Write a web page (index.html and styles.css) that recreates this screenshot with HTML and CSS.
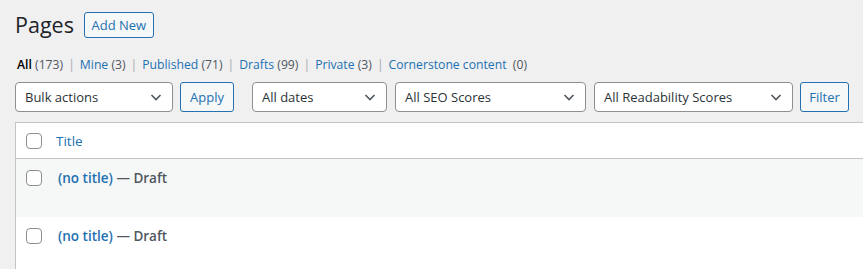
FILE: index.html
```html
<!DOCTYPE html>
<html>
<head>
<meta charset="utf-8">
<link rel="stylesheet" href="styles.css">
</head>
<body>
<div class="wrap">
  <div class="head">
    <h1 class="title">Pages</h1>
    <a class="add-new">Add New</a>
  </div>
  <ul class="subsubsub">
    <li><a class="current">All <span class="count">(173)</span></a><span class="sep">|</span></li>
    <li><a>Mine <span class="count">(3)</span></a><span class="sep">|</span></li>
    <li><a>Published <span class="count">(71)</span></a><span class="sep">|</span></li>
    <li><a>Drafts <span class="count">(99)</span></a><span class="sep">|</span></li>
    <li><a>Private <span class="count">(3)</span></a><span class="sep">|</span></li>
    <li><a>Cornerstone content <span class="count">&nbsp;(0)</span></a></li>
  </ul>
  <div class="tablenav">
    <div class="select w-bulk">Bulk actions<svg class="chev" viewBox="0 0 16 16"><path d="M3.5 6 L8 10.5 L12.5 6" fill="none" stroke="#50575e" stroke-width="1.6"/></svg></div>
    <button class="btn apply">Apply</button>
    <div class="select w-dates">All dates<svg class="chev" viewBox="0 0 16 16"><path d="M3.5 6 L8 10.5 L12.5 6" fill="none" stroke="#50575e" stroke-width="1.6"/></svg></div>
    <div class="select w-seo">All SEO Scores<svg class="chev" viewBox="0 0 16 16"><path d="M3.5 6 L8 10.5 L12.5 6" fill="none" stroke="#50575e" stroke-width="1.6"/></svg></div>
    <div class="select w-read">All Readability Scores<svg class="chev" viewBox="0 0 16 16"><path d="M3.5 6 L8 10.5 L12.5 6" fill="none" stroke="#50575e" stroke-width="1.6"/></svg></div>
    <button class="btn filter">Filter</button>
  </div>
  <div class="table">
    <div class="row header">
      <span class="cb"></span>
      <a class="col-title">Title</a>
    </div>
    <div class="row item alt">
      <span class="cb"></span>
      <strong class="row-title"><a>(no title)</a> — Draft</strong>
    </div>
    <div class="row item">
      <span class="cb"></span>
      <strong class="row-title"><a>(no title)</a> — Draft</strong>
    </div>
  </div>
</div>
</body>
</html>
```
FILE: styles.css
```css
html, body {
  margin: 0;
  padding: 0;
  background: #f0f0f1;
  overflow: hidden;
}
body {
  font-family: "Open Sans", "Noto Sans", sans-serif;
  font-size: 13px;
  color: #3c434a;
  width: 863px;
  height: 269px;
}
.wrap {
  padding: 0 0 0 15px;
}
.head {
  display: flex;
  align-items: center;
  height: 50px;
}
.title {
  margin: 0;
  font-size: 21.5px;
  font-weight: 400;
  color: #1d2327;
  line-height: 1;
}
.add-new {
  margin-left: 10px;
  height: 24px;
  width: 68px;
  box-sizing: content-box;
  border: 1px solid #2271b1;
  border-radius: 3px;
  background: #f6f7f7;
  color: #2271b1;
  font-size: 13px;
  display: flex;
  align-items: center;
  justify-content: center;
}
.subsubsub {
  list-style: none;
  margin: 0;
  padding: 0 0 0 2px;
  display: flex;
  height: 28px;
  align-items: center;
  font-size: 12.2px;
}
.subsubsub li {
  display: flex;
  align-items: center;
}
.subsubsub a {
  color: #2271b1;
}
.subsubsub a.current {
  color: #000;
  font-weight: 600;
}
.count {
  color: #50575e;
  font-weight: 400;
}
.sep {
  color: #a7aaad;
  margin: 0 5px;
}
.tablenav {
  display: flex;
  align-items: center;
  height: 30px;
  margin-top: 4px;
}
.select {
  box-sizing: border-box;
  height: 30px;
  border: 1px solid #8c8f94;
  border-radius: 4px;
  background: #fff;
  color: #2c3338;
  font-size: 13px;
  padding: 0 8px 0 9px;
  display: flex;
  align-items: center;
  justify-content: space-between;
}
.chev {
  width: 16px;
  height: 16px;
}
.w-bulk { width: 158px; }
.w-dates { width: 135px; margin-left: 18px; }
.w-seo { width: 191px; margin-left: 8px; }
.w-read { width: 199px; margin-left: 8px; }
.btn {
  box-sizing: border-box;
  height: 30px;
  border: 1px solid #2271b1;
  border-radius: 3px;
  background: #f6f7f7;
  color: #2271b1;
  font-family: inherit;
  font-size: 13px;
  padding: 0;
}
.apply { width: 54px; margin-left: 7px; }
.filter { width: 49px; margin-left: 7px; }
.table {
  margin-top: 10px;
  width: 848px;
  box-sizing: border-box;
  border: 1px solid #c3c4c7;
  border-right: none;
  background: #fff;
}
.row {
  display: flex;
  align-items: flex-start;
  padding-left: 10px;
}
.header {
  height: 35px;
  align-items: center;
  border-bottom: 1px solid #c3c4c7;
}
.item {
  height: 58px;
  padding-top: 11px;
  box-sizing: border-box;
}
.alt {
  background: #f6f7f7;
}
.cb {
  width: 16px;
  height: 16px;
  box-sizing: border-box;
  border: 1px solid #8c8f94;
  border-radius: 4px;
  background: #fff;
  flex: none;
}
.col-title {
  color: #2271b1;
  font-size: 13.5px;
  margin-left: 14px;
}
.row-title {
  margin-left: 16px;
  font-size: 13.5px;
  font-weight: 600;
  color: #50575e;
  line-height: 16px;
}
.row-title a {
  color: #2271b1;
}
```
